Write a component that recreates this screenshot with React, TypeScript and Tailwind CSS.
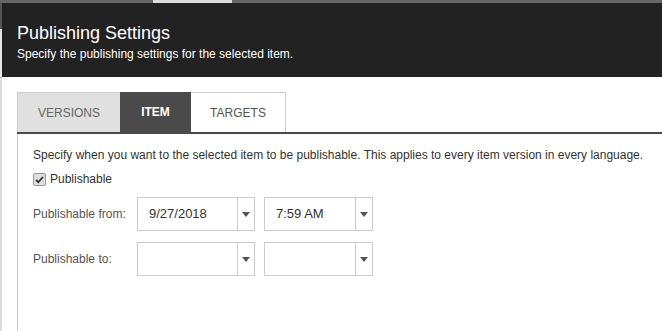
export default function App() {
  const Caret = () => (
    <svg width="8" height="5" viewBox="0 0 8 5">
      <path d="M0 0h8L4 5z" fill="#555" />
    </svg>
  );

  const Picker = ({ value, inner }: { value?: string; inner: string }) => (
    <div className="flex h-[34px] border border-[#ccc] bg-white">
      <div className={`${inner} flex items-center border-r border-[#ccc] pl-[11px] text-[13px] text-[#333]`}>
        {value}
      </div>
      <div className="flex w-[16px] items-center justify-center">
        <Caret />
      </div>
    </div>
  );

  return (
    <div className="flex h-[331px] w-[662px] flex-col overflow-hidden bg-white font-['Liberation_Sans',Arial,sans-serif]">
      {/* window strip behind the dialog */}
      <div className="flex h-[3px] shrink-0 bg-[#666]">
        <div className="ml-[153px] w-[79px] bg-[#ddd]" />
      </div>

      <div className="flex flex-1">
        <div className="flex w-[2px] flex-col">
          <div className="h-[26px] bg-[#555]" />
          <div className="h-[48px] bg-[#e6e6e6]" />
          <div className="h-[1px] bg-[#aaa]" />
          <div className="flex-1 bg-[#dcdcdc]" />
        </div>

        <div className="flex flex-1 flex-col">
          {/* Header */}
          <div className="h-[74px] shrink-0 bg-[#222] pl-[15px] pt-[19px] text-white">
            <h1 className="text-[18px] leading-[22px]">Publishing Settings</h1>
            <p className="mt-[2px] text-[12px] leading-[16px]">
              Specify the publishing settings for the selected item.
            </p>
          </div>

          {/* Body */}
          <div className="flex flex-1 flex-col pl-[15px] pt-[15px]">
            <div className="flex h-[40px] shrink-0 text-[12px]">
              <div className="flex w-[103px] items-center justify-center border-l border-t border-[#ccc] bg-[#e0e0e0] text-[#666]">
                VERSIONS
              </div>
              <div className="flex w-[71px] items-center justify-center bg-[#4a4a4a] font-bold text-white">
                ITEM
              </div>
              <div className="flex w-[95px] items-center justify-center border-r border-t border-[#ccc] bg-white text-[#555]">
                TARGETS
              </div>
            </div>
            <div className="h-[2px] shrink-0 bg-[#4a4a4a]" />

            <div className="flex flex-1 flex-col border-l border-[#ccc] pl-[15px] pt-[13px] text-[12px] text-[#333]">
              <p className="leading-[16px]">
                Specify when you want to the selected item to be publishable. This applies to every item version in every language.
              </p>

              <div className="mt-[8px] flex h-[16px] items-center">
                <svg width="13" height="13" viewBox="0 0 13 13">
                  <rect x="0.5" y="0.5" width="12" height="12" rx="1.5" fill="#dedede" stroke="#9a9a9a" />
                  <path d="M3 6.8l2.3 2.3L10 4" fill="none" stroke="#333" strokeWidth="1.8" />
                </svg>
                <span className="ml-[4px]">Publishable</span>
              </div>

              <div className="mt-[10px] flex items-center">
                <span className="w-[104px] text-[#555]">Publishable from:</span>
                <Picker value="9/27/2018" inner="w-[100px]" />
                <div className="ml-[9px]">
                  <Picker value="7:59 AM" inner="w-[91px]" />
                </div>
              </div>

              <div className="mt-[11px] flex items-center">
                <span className="w-[104px] text-[#555]">Publishable to:</span>
                <Picker inner="w-[100px]" />
                <div className="ml-[9px]">
                  <Picker inner="w-[91px]" />
                </div>
              </div>
            </div>
          </div>
        </div>
      </div>
    </div>
  );
}
